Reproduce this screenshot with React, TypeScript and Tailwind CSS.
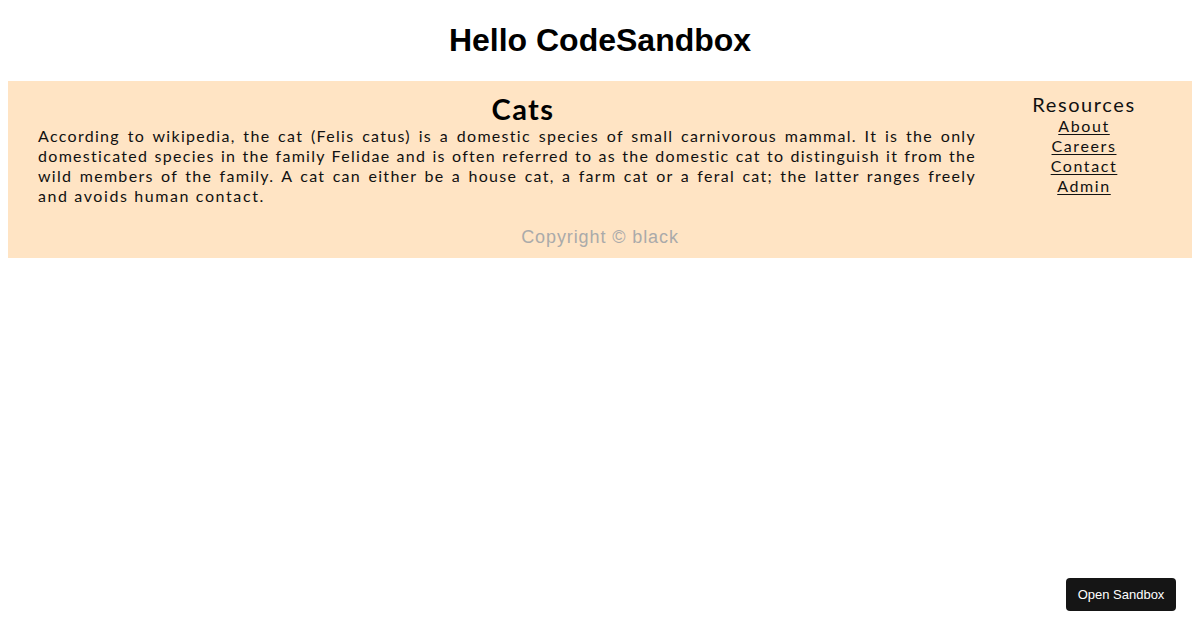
import React from "react";

const lines = [
  "According to wikipedia, the cat (Felis catus) is a domestic species of small carnivorous mammal. It is the only",
  "domesticated species in the family Felidae and is often referred to as the domestic cat to distinguish it from the",
  "wild members of the family. A cat can either be a house cat, a farm cat or a feral cat; the latter ranges freely",
];

export default function App() {
  return (
    <div className="relative min-h-[630px] bg-white px-2 pt-[22px] text-black">
      <h1 className="m-0 mb-[22px] h-[37px] text-center font-['Liberation_Sans',Arial,sans-serif] text-[32px] font-bold leading-[37px]">
        Hello CodeSandbox
      </h1>
      <div className="flex flex-col bg-[#ffe4c4] pb-[10px] font-['Lato','Open_Sans',sans-serif] text-[#111]">
        <div className="flex">
          <main className="w-[968px] pl-[30px] pt-[10px]">
            <h2 className="m-0 pl-[32px] text-center text-[29px] font-bold leading-[35px] tracking-[1.4px] text-black">
              Cats
            </h2>
            <div className="text-[16px] leading-[20px] tracking-[1.6px]">
              {lines.map((l) => (
                <div key={l} className="text-justify tracking-[1.3px] [text-align-last:justify]">
                  {l}
                </div>
              ))}
              <div>and avoids human contact.</div>
            </div>
          </main>
          <aside className="flex w-[216px] flex-col items-center pt-[11px]">
            <div className="text-[20px] leading-[24px] tracking-[1.6px]">Resources</div>
            {["About", "Careers", "Contact", "Admin"].map((t) => (
              <a
                key={t}
                href="#"
                className="text-[16px] leading-[20px] tracking-[1.6px] text-[#111] underline underline-offset-2"
              >
                {t}
              </a>
            ))}
          </aside>
        </div>
        <div className="mt-[20px] text-center font-['Liberation_Sans',Arial,sans-serif] text-[18px] leading-[22px] tracking-[0.9px] text-[#aaa]">
          Copyright © black
        </div>
      </div>
      <button className="absolute right-[24px] top-[578px] flex h-[33px] w-[110px] items-center justify-center rounded-[4px] bg-[#151515] font-['Liberation_Sans',Arial,sans-serif] text-[13px] text-white">
        Open Sandbox
      </button>
    </div>
  );
}
